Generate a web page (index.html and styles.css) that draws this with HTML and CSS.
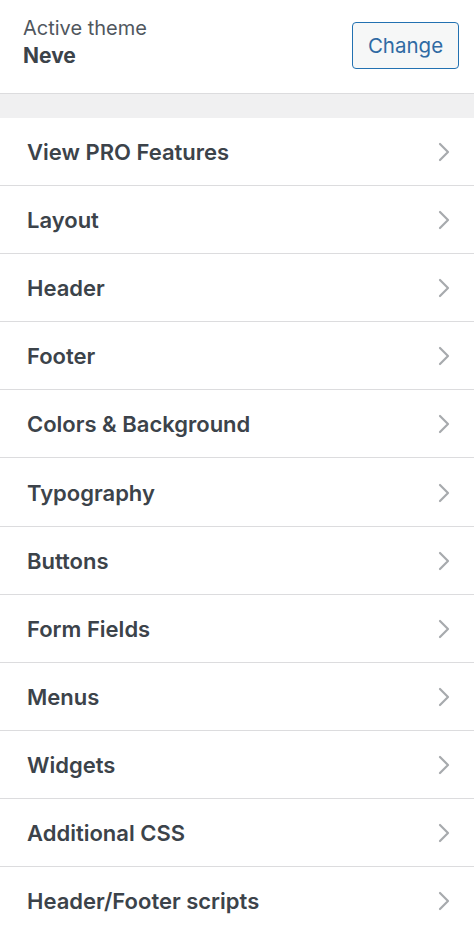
FILE: index.html
```html
<!DOCTYPE html>
<html>
<head>
<meta charset="utf-8">
<link rel="stylesheet" href="styles.css">
</head>
<body>
<div class="panel">
  <div class="theme-head">
    <div class="theme-info">
      <div class="theme-label">Active theme</div>
      <div class="theme-name">Neve</div>
    </div>
    <button class="change-btn">Change</button>
  </div>
  <div class="band"></div>
  <ul class="menu">
    <li class="item"><span>View PRO Features</span><svg class="chev" viewBox="0 0 12 20"><path d="M2 2 L10 10 L2 18"/></svg></li>
    <li class="item"><span>Layout</span><svg class="chev" viewBox="0 0 12 20"><path d="M2 2 L10 10 L2 18"/></svg></li>
    <li class="item"><span>Header</span><svg class="chev" viewBox="0 0 12 20"><path d="M2 2 L10 10 L2 18"/></svg></li>
    <li class="item"><span>Footer</span><svg class="chev" viewBox="0 0 12 20"><path d="M2 2 L10 10 L2 18"/></svg></li>
    <li class="item"><span>Colors &amp; Background</span><svg class="chev" viewBox="0 0 12 20"><path d="M2 2 L10 10 L2 18"/></svg></li>
    <li class="item"><span>Typography</span><svg class="chev" viewBox="0 0 12 20"><path d="M2 2 L10 10 L2 18"/></svg></li>
    <li class="item"><span>Buttons</span><svg class="chev" viewBox="0 0 12 20"><path d="M2 2 L10 10 L2 18"/></svg></li>
    <li class="item"><span>Form Fields</span><svg class="chev" viewBox="0 0 12 20"><path d="M2 2 L10 10 L2 18"/></svg></li>
    <li class="item"><span>Menus</span><svg class="chev" viewBox="0 0 12 20"><path d="M2 2 L10 10 L2 18"/></svg></li>
    <li class="item"><span>Widgets</span><svg class="chev" viewBox="0 0 12 20"><path d="M2 2 L10 10 L2 18"/></svg></li>
    <li class="item"><span>Additional CSS</span><svg class="chev" viewBox="0 0 12 20"><path d="M2 2 L10 10 L2 18"/></svg></li>
    <li class="item"><span>Header/Footer scripts</span><svg class="chev" viewBox="0 0 12 20"><path d="M2 2 L10 10 L2 18"/></svg></li>
  </ul>
</div>
</body>
</html>
```

FILE: styles.css
```css
html, body {
  margin: 0;
  padding: 0;
  background: #ffffff;
}
body {
  font-family: "Inter", "Noto Sans", "Liberation Sans", sans-serif;
  width: 474px;
  height: 932px;
  overflow: hidden;
}
.panel {
  display: flex;
  flex-direction: column;
}
.theme-head {
  height: 94px;
  box-sizing: border-box;
  display: flex;
  justify-content: space-between;
  align-items: flex-start;
  padding: 14px 15px 0 23px;
  border-bottom: 1px solid #dcdcde;
}
.theme-label {
  font-size: 20px;
  color: #50575e;
  line-height: 28px;
}
.theme-name {
  font-size: 21px;
  font-weight: 700;
  color: #3c434a;
  line-height: 28px;
}
.change-btn {
  margin-top: 8px;
  width: 107px;
  height: 47px;
  border: 1px solid #2271b1;
  border-radius: 4px;
  background: #f6f7f7;
  color: #2f6aa3;
  font-family: inherit;
  font-size: 20.5px;
  padding: 0;
}
.band {
  height: 24px;
  background: #f0f0f1;
}
.menu {
  list-style: none;
  margin: 0;
  padding: 0;
}
.item {
  height: 68.1px;
  box-sizing: border-box;
  border-bottom: 1px solid #dcdcde;
  display: flex;
  align-items: center;
  justify-content: space-between;
  padding: 1px 24px 0 27px;
  font-size: 22px;
  font-weight: 600;
  color: #3c434a;
}
.chev {
  width: 12px;
  height: 20px;
  fill: none;
  stroke: #a7aaad;
  stroke-width: 2.2;
  stroke-linecap: round;
  stroke-linejoin: round;
}
```
